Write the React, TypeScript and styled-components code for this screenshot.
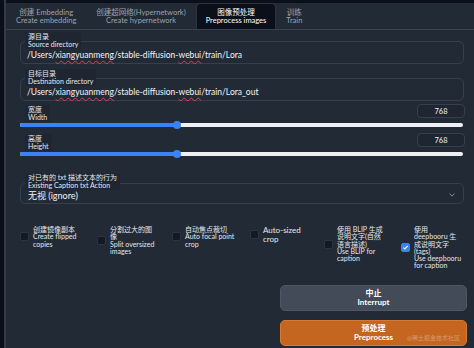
import React from "react";
import styled, { createGlobalStyle } from "styled-components";

const colors = {
  outer: "#0b0f19",
  panel: "#222a36",
  labelBg: "#1f2632",
  border: "#363f4d",
  text: "#e5e7eb",
  muted: "#9ca3af",
  blue: "#3b82f6",
  track: "#eef0f3",
  interrupt: "#444b58",
  orange: "#c4661f",
};

const GlobalStyle = createGlobalStyle`
  html, body {
    margin: 0;
    padding: 0;
    background: ${colors.outer};
  }
  body {
    width: 474px;
    height: 348px;
    overflow: hidden;
    font-family: Lato, "Noto Sans CJK SC", sans-serif;
    color: ${colors.text};
  }
`;

const Shell = styled.div`
  display: flex;
  height: 348px;
`;

const Gutter = styled.div`
  width: 4px;
  background: ${colors.outer};
  border-right: 2px solid #333b48;
`;

const Main = styled.main`
  flex: 1;
  display: flex;
  flex-direction: column;
  background: ${colors.panel};
  margin-top: 3px;
`;

const TabBar = styled.nav`
  display: flex;
  height: 26px;
  border-bottom: 1px solid #3a4352;
`;

const Tab = styled.div<{ $active?: boolean }>`
  display: flex;
  flex-direction: column;
  align-items: center;
  justify-content: center;
  padding: 1px 9px 0;
  font-size: 7.5px;
  line-height: 8px;
  color: ${(p) => (p.$active ? "#ffffff" : colors.muted)};
  background: ${(p) => (p.$active ? colors.outer : "transparent")};
  border-radius: 4px 4px 0 0;
  border: 1px solid ${(p) => (p.$active ? "#2c3442" : "transparent")};
  border-bottom: none;
`;

const Content = styled.section`
  display: flex;
  flex-direction: column;
  padding: 0 10px 0 14px;
`;

const Field = styled.div<{ $gap: number }>`
  display: flex;
  flex-direction: column;
  margin-top: ${(p) => p.$gap}px;
`;

const FieldLabel = styled.label<{ $overlap?: number }>`
  position: relative;
  z-index: 1;
  align-self: flex-start;
  display: flex;
  flex-direction: column;
  margin-left: 5px;
  margin-bottom: ${(p) => -(p.$overlap ?? 0)}px;
  padding: 1px 3px;
  background: ${colors.labelBg};
  border-radius: 2px;
  font-size: 7px;
  line-height: 7.5px;
  color: ${colors.text};
`;

const TextBox = styled.div<{ $height: number }>`
  display: flex;
  align-items: center;
  height: ${(p) => p.$height}px;
  box-sizing: border-box;
  padding: 4px 6px 0;
  border: 1px solid ${colors.border};
  border-radius: 5px;
  font-size: 8.5px;
  color: #f3f4f6;
  white-space: nowrap;
`;

const Misspelt = styled.span`
  text-decoration: underline wavy #d9434b;
  text-decoration-thickness: 0.6px;
  text-underline-offset: 1.5px;
`;

const SliderHead = styled.div`
  display: flex;
  justify-content: space-between;
  align-items: flex-start;
`;

const NumberBox = styled.div`
  width: 48px;
  height: 14px;
  box-sizing: border-box;
  margin-right: -1px;
  border: 1px solid ${colors.border};
  border-radius: 4px;
  background: #1f2632;
  display: flex;
  align-items: center;
  justify-content: center;
  font-size: 7.5px;
  color: #f3f4f6;
`;

const SliderTrack = styled.div`
  position: relative;
  height: 8px;
  margin-top: -1px;
  margin-right: 1px;
  display: flex;
  align-items: center;
`;

const TrackLine = styled.div`
  flex: 1;
  height: 4px;
  border-radius: 2px;
  background: ${colors.track};
  overflow: hidden;
  display: flex;
`;

const TrackFill = styled.div`
  height: 100%;
  background: ${colors.blue};
`;

const Thumb = styled.div`
  position: absolute;
  top: 0;
  width: 8px;
  height: 8px;
  margin-left: -4px;
  border-radius: 50%;
  background: ${colors.blue};
`;

const Select = styled(TextBox)`
  justify-content: space-between;
  padding: 3px 8px 0 7px;
  font-size: 9px;
`;

const Chevron = styled.svg`
  width: 6px;
  height: 4px;
  margin-top: -1px;
`;

const CheckRow = styled.div`
  display: flex;
  align-items: flex-start;
  margin-top: 22px;
`;

const CheckItem = styled.div<{ $width: number }>`
  display: flex;
  align-items: center;
  gap: 4px;
  width: ${(p) => p.$width}px;
  flex-shrink: 0;
`;

const Box = styled.div<{ $checked?: boolean }>`
  width: 9px;
  height: 9px;
  flex-shrink: 0;
  box-sizing: border-box;
  border-radius: 2px;
  border: 1px solid ${(p) => (p.$checked ? colors.blue : "#2d3542")};
  background: ${(p) => (p.$checked ? colors.blue : "#141a24")};
  display: flex;
  align-items: center;
  justify-content: center;
`;

const CheckText = styled.div<{ $big?: boolean }>`
  display: flex;
  flex-direction: column;
  font-size: ${(p) => (p.$big ? "8px" : "7px")};
  line-height: ${(p) => (p.$big ? "8.5px" : "7.3px")};
  color: ${colors.text};
`;

const Actions = styled.div`
  display: grid;
  grid-template-columns: 1fr 187px;
  margin-top: 15px;
  margin-right: -3px;
`;

const ButtonStack = styled.div`
  grid-column: 2;
  display: flex;
  flex-direction: column;
  gap: 9px;
`;

const ActionButton = styled.button<{ $primary?: boolean }>`
  position: relative;
  height: 26px;
  border-radius: 5px;
  border: 1px solid ${(p) => (p.$primary ? "#d27a36" : "#4f5664")};
  background: ${(p) => (p.$primary ? colors.orange : colors.interrupt)};
  color: #ffffff;
  font-family: inherit;
  font-weight: 700;
  display: flex;
  flex-direction: column;
  align-items: center;
  justify-content: center;
  padding: 0;
  font-size: 8px;
  line-height: 9px;
`;

const Watermark = styled.span`
  position: absolute;
  right: 6px;
  bottom: 4px;
  font-size: 6px;
  line-height: 7px;
  font-weight: 400;
  color: rgba(255, 255, 255, 0.35);
`;

const tabs = [
  { zh: "创建 Embedding", en: "Create embedding" },
  { zh: "创建超网络(Hypernetwork)", en: "Create hypernetwork" },
  { zh: "图像预处理", en: "Preprocess images", active: true },
  { zh: "训练", en: "Train" },
];

const sliders = [
  { zh: "宽度", en: "Width", value: 768, gap: 3 },
  { zh: "高度", en: "Height", value: 768, gap: 4 },
];

const checks: { lines: string[]; checked?: boolean; big?: boolean; width: number }[] = [
  { lines: ["创建镜像副本", "Create flipped", "copies"], width: 77 },
  { lines: ["分割过大的图", "像", "Split oversized", "images"], width: 75 },
  { lines: ["自动焦点裁切", "Auto focal point", "crop"], width: 78 },
  { lines: ["Auto-sized", "crop"], big: true, width: 74 },
  { lines: ["使用 BLIP 生成", "说明文字(自然", "语言描述)", "Use BLIP for", "caption"], width: 77 },
  { lines: ["使用", "deepbooru 生", "成说明文字", "(tags)", "Use deepbooru", "for caption"], checked: true, width: 62 },
];

const MIN = 64;
const MAX = 2048;

function PathText({ tail }: { tail: string }) {
  return (
    <span>
      /Users/<Misspelt>xiangyuanmeng</Misspelt>/stable-diffusion-<Misspelt>webui</Misspelt>/train/{tail}
    </span>
  );
}

function Slider({ zh, en, value, gap }: { zh: string; en: string; value: number; gap: number }) {
  const pct = ((value - MIN) / (MAX - MIN)) * 100;
  return (
    <Field $gap={gap}>
      <SliderHead>
        <FieldLabel style={{ marginTop: 1 }}>
          <span>{zh}</span>
          <span>{en}</span>
        </FieldLabel>
        <NumberBox>{value}</NumberBox>
      </SliderHead>
      <SliderTrack>
        <TrackLine>
          <TrackFill style={{ width: `${pct}%` }} />
        </TrackLine>
        <Thumb style={{ left: `${pct}%` }} />
      </SliderTrack>
    </Field>
  );
}

export default function App() {
  return (
    <>
      <GlobalStyle />
      <Shell>
        <Gutter />
        <Main>
          <TabBar>
            {tabs.map((t) => (
              <Tab key={t.en} $active={t.active}>
                <span>{t.zh}</span>
                <span>{t.en}</span>
              </Tab>
            ))}
          </TabBar>
          <Content>
            <Field $gap={2}>
              <FieldLabel $overlap={8}>
                <span>源目录</span>
                <span>Source directory</span>
              </FieldLabel>
              <TextBox $height={23}>
                <PathText tail="Lora" />
              </TextBox>
            </Field>
            <Field $gap={5}>
              <FieldLabel $overlap={8}>
                <span>目标目录</span>
                <span>Destination directory</span>
              </FieldLabel>
              <TextBox $height={23}>
                <PathText tail="Lora_out" />
              </TextBox>
            </Field>
            {sliders.map((s) => (
              <Slider key={s.en} {...s} />
            ))}
            <Field $gap={15}>
              <FieldLabel $overlap={7}>
                <span>对已有的 txt 描述文本的行为</span>
                <span>Existing Caption txt Action</span>
              </FieldLabel>
              <Select $height={21}>
                <span>无视 (ignore)</span>
                <Chevron viewBox="0 0 6 4">
                  <path d="M0.6 0.6 L3 3.2 L5.4 0.6" fill="none" stroke="#8b929e" strokeWidth="0.9" />
                </Chevron>
              </Select>
            </Field>
            <CheckRow>
              {checks.map((c) => (
                <CheckItem key={c.lines.join()} $width={c.width}>
                  <Box $checked={c.checked}>
                    {c.checked && (
                      <svg width="7" height="7" viewBox="0 0 7 7">
                        <path d="M1.3 3.6 L2.8 5 L5.7 1.9" fill="none" stroke="#fff" strokeWidth="1.1" />
                      </svg>
                    )}
                  </Box>
                  <CheckText $big={c.big}>
                    {c.lines.map((l) => (
                      <span key={l}>{l}</span>
                    ))}
                  </CheckText>
                </CheckItem>
              ))}
            </CheckRow>
            <Actions>
              <ButtonStack>
                <ActionButton>
                  <span>中止</span>
                  <span>Interrupt</span>
                </ActionButton>
                <ActionButton $primary>
                  <span>预处理</span>
                  <span>Preprocess</span>
                  <Watermark>@稀土掘金技术社区</Watermark>
                </ActionButton>
              </ButtonStack>
            </Actions>
          </Content>
        </Main>
      </Shell>
    </>
  );
}
